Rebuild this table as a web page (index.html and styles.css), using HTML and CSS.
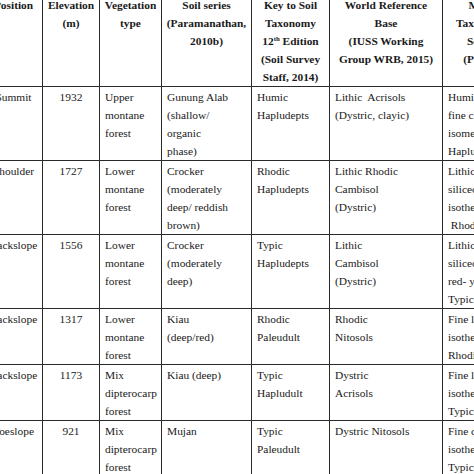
FILE: index.html
```html
<!DOCTYPE html>
<html>
<head>
<meta charset="utf-8">
<link rel="stylesheet" href="styles.css">
</head>
<body>
<div class="frame">
<table class="soil">
<colgroup>
<col class="c1"><col class="c2"><col class="c3"><col class="c4"><col class="c5"><col class="c6"><col class="c7">
</colgroup>
<thead>
<tr>
<th>Position</th>
<th>Elevation<br>(m)</th>
<th>Vegetation<br>type</th>
<th>Soil series<br>(Paramanathan,<br>2010b)</th>
<th>Key to Soil<br>Taxonomy<br>12<sup>th</sup> Edition<br>(Soil Survey<br>Staff, 2014)</th>
<th>World Reference<br>Base<br>(IUSS Working<br>Group WRB, 2015)</th>
<th>Main<br>Taxonomy<br>Series<br>(Param</th>
</tr>
</thead>
<tbody>
<tr>
<td class="pos">Summit</td>
<td class="num">1932</td>
<td>Upper<br>montane<br>forest</td>
<td>Gunung Alab<br>(shallow/<br>organic<br>phase)</td>
<td>Humic<br>Hapludepts</td>
<td>Lithic&nbsp; Acrisols<br>(Dystric, clayic)</td>
<td>Humic-lithic,<br>fine clayey,<br>isomesic,<br>Hapludepts</td>
</tr>
<tr>
<td class="pos">Shoulder</td>
<td class="num">1727</td>
<td>Lower<br>montane<br>forest</td>
<td>Crocker<br>(moderately<br>deep/ reddish<br>brown)</td>
<td>Rhodic<br>Hapludepts</td>
<td>Lithic Rhodic<br>Cambisol<br>(Dystric)</td>
<td>Lithic, fine,<br>siliceous,<br>isothermic,<br>&nbsp;Rhodic</td>
</tr>
<tr>
<td class="pos">Backslope</td>
<td class="num">1556</td>
<td>Lower<br>montane<br>forest</td>
<td>Crocker<br>(moderately<br>deep)</td>
<td>Typic<br>Hapludepts</td>
<td>Lithic<br>Cambisol<br>(Dystric)</td>
<td>Lithic, fine,<br>siliceous,<br>red- yellow,<br>Typic-</td>
</tr>
<tr>
<td class="pos">Backslope</td>
<td class="num">1317</td>
<td>Lower<br>montane<br>forest</td>
<td>Kiau<br>(deep/red)</td>
<td>Rhodic<br>Paleudult</td>
<td>Rhodic<br>Nitosols</td>
<td>Fine loamy,<br>isothermic,<br>Rhodic</td>
</tr>
<tr>
<td class="pos">Backslope</td>
<td class="num">1173</td>
<td>Mix<br>dipterocarp<br>forest</td>
<td>Kiau (deep)</td>
<td>Typic<br>Hapludult</td>
<td>Dystric<br>Acrisols</td>
<td>Fine loamy,<br>isothermic,<br>Typic-</td>
</tr>
<tr>
<td class="pos">Toeslope</td>
<td class="num">921</td>
<td>Mix<br>dipterocarp<br>forest</td>
<td>Mujan</td>
<td>Typic<br>Paleudult</td>
<td>Dystric Nitosols</td>
<td>Fine clayey,<br>isothermic,<br>Typic-</td>
</tr>
</tbody>
</table>
</div>
</body>
</html>
```
FILE: styles.css
```css
html, body {
  margin: 0;
  padding: 0;
  background: #ffffff;
}
.frame {
  width: 474px;
  height: 474px;
  overflow: hidden;
}
.soil {
  border-collapse: collapse;
  table-layout: fixed;
  width: 536px;
  margin-left: -16px;
  margin-top: -6px;
  font-family: "Liberation Serif", "Times New Roman", serif;
  font-size: 11.4px;
  line-height: 18px;
  color: #1a1a1a;
}
.c1 { width: 58px; }
.c2 { width: 57px; }
.c3 { width: 62px; }
.c4 { width: 90px; }
.c5 { width: 78px; }
.c6 { width: 113px; }
.c7 { width: 78px; }
.soil th,
.soil td {
  border: 1px solid #2b2b2b;
  padding: 1px 0 0 5px;
  vertical-align: top;
  white-space: nowrap;
  overflow: hidden;
}
.soil th {
  font-weight: bold;
  text-align: center;
  padding-left: 0;
}
.soil td.pos,
.soil td.num {
  text-align: center;
  padding-left: 0;
}
.soil sup {
  font-size: 0.6em;
  line-height: 0;
  vertical-align: 0.55em;
}
```
